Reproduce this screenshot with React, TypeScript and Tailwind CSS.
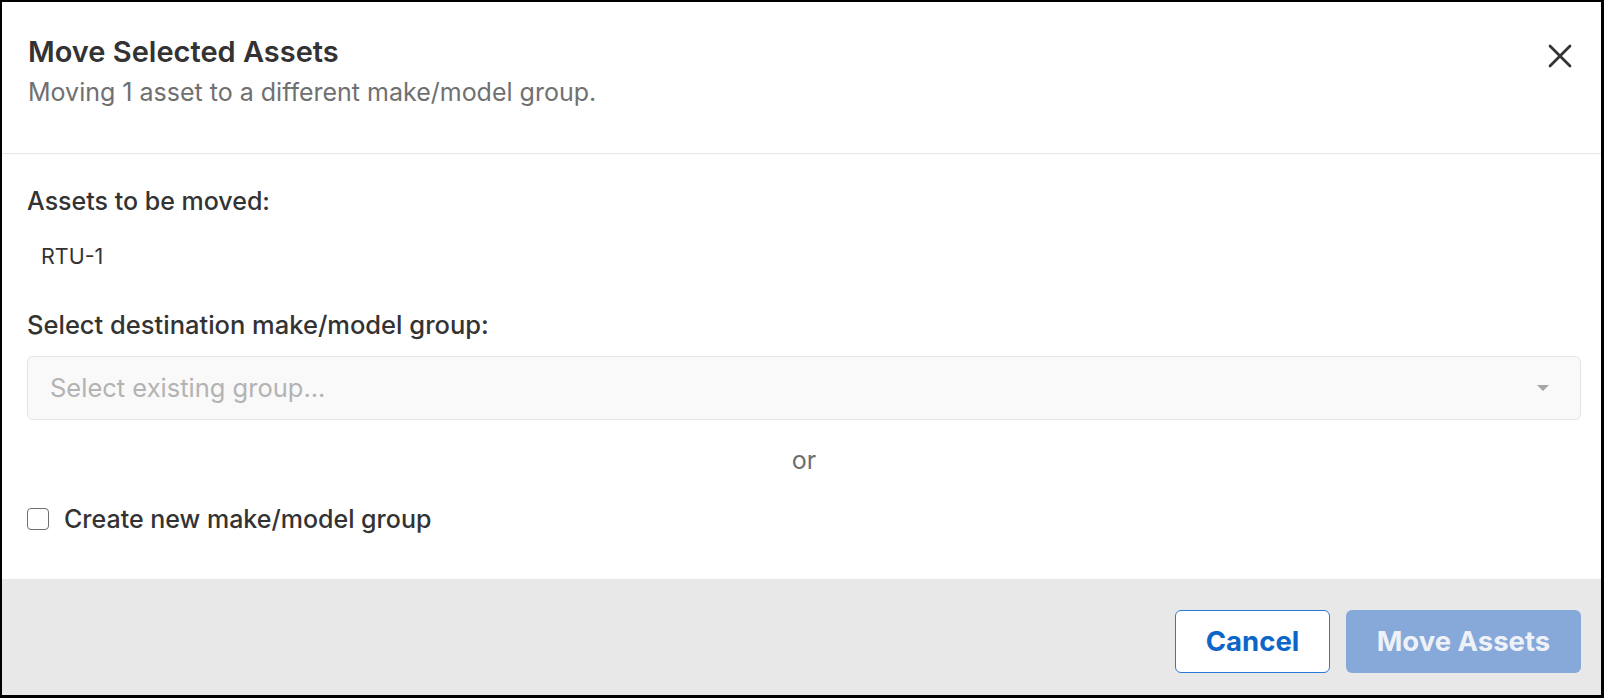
import React from "react";

export default function App() {
  return (
    <div
      className="w-[1604px] h-[698px] bg-white border-black border-l-2 border-t-2 border-r-[3px] border-b-[3px] flex flex-col overflow-hidden text-[#333333]"
      style={{ fontFamily: "Inter, 'Noto Sans', sans-serif" }}
    >
      {/* Header */}
      <div className="h-[152px] shrink-0 border-b border-[#e6e6e6] flex items-start justify-between pl-[26px] pr-[27px] pt-[32px]">
        <div className="flex flex-col">
          <h1 className="text-[29px] leading-[36px] font-semibold text-[#333333]">Move Selected Assets</h1>
          <p className="mt-[6px] text-[25px] leading-[32px] text-[#707070]">
            Moving 1 asset to a different make/model group.
          </p>
        </div>
        <button className="mt-[8px] w-[28px] h-[28px] flex items-center justify-center text-[#333333]">
          <svg width="24" height="24" viewBox="0 0 24 24" fill="none" stroke="currentColor" strokeWidth="2.8" strokeLinecap="round">
            <path d="M2 2L22 22M22 2L2 22" />
          </svg>
        </button>
      </div>

      {/* Body */}
      <div className="flex-1 flex flex-col pl-[25px] pr-[20px] pt-[31px]">
        <div className="text-[25px] leading-[32px] font-medium text-[#333333]">Assets to be moved:</div>
        <div className="mt-[25px] pl-[14px] text-[21.5px] leading-[28px] text-[#333333]">RTU-1</div>
        <div className="mt-[39px] text-[25.5px] leading-[32px] font-medium text-[#333333]">
          Select destination make/model group:
        </div>
        <div className="mt-[15px] h-[64px] rounded-[6px] border border-[#e4e4e4] bg-[#f9f9f9] flex items-center justify-between pl-[22px] pr-[31px]">
          <span className="text-[25.5px] text-[#b3b3b3]">Select existing group...</span>
          <svg width="12" height="6" viewBox="0 0 12 6">
            <path d="M0 0H12L6 6Z" fill="#a6a6a6" />
          </svg>
        </div>
        <div className="mt-[24px] text-center text-[25px] leading-[32px] text-[#6e6e6e]">or</div>
        <label className="mt-[27px] flex items-center gap-[15px]">
          <span className="w-[22px] h-[22px] rounded-[4px] border-[1.5px] border-[#6f6f6f] bg-white" />
          <span className="text-[25px] leading-[32px] font-medium text-[#333333]">Create new make/model group</span>
        </label>
      </div>

      {/* Footer */}
      <div className="h-[116px] shrink-0 bg-[#e8e8e8] flex justify-end items-start gap-[16px] pt-[31px] pr-[20px]">
        <button className="w-[155px] h-[63px] rounded-[6px] border border-[#2a78d6] bg-white text-[27.5px] font-bold text-[#0b66c8]">
          Cancel
        </button>
        <button className="w-[235px] h-[63px] rounded-[6px] bg-[#86a9d9] text-[27.5px] font-bold text-[#eef2f8]">
          Move Assets
        </button>
      </div>
    </div>
  );
}
